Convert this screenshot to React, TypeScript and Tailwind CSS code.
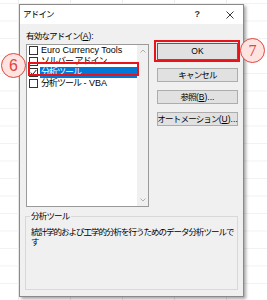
import React from "react";

const font = "font-['Liberation_Sans','Noto_Sans_CJK_JP',sans-serif]";

const items = [
  { jp: "", en: "Euro Currency Tools", checked: false },
  { jp: "ソルバー アドイン", en: "", checked: false },
  { jp: "分析ツール", en: "", checked: true },
  { jp: "分析ツール", en: " - VBA", checked: false },
];

function Checkbox({ checked }: { checked: boolean }) {
  return (
    <div className="w-[9px] h-[9px] border border-[#333] bg-white flex items-center justify-center shrink-0">
      {checked && (
        <svg width="7" height="7" viewBox="0 0 7 7">
          <path d="M0.8 3.6 L2.6 5.5 L6.3 1" fill="none" stroke="#222" strokeWidth="1" />
        </svg>
      )}
    </div>
  );
}

function Button({ children, primary }: { children: React.ReactNode; primary?: boolean }) {
  return (
    <div
      className={
        "w-[81px] flex items-center justify-center bg-[#e1e1e1] text-[8.5px] text-black whitespace-pre " +
        (primary ? "h-[17px] border border-[#0078d7]" : "h-[14px] border border-[#adadad]")
      }
    >
      {children}
    </div>
  );
}

function Marker({ n, serif }: { n: string; serif?: boolean }) {
  return (
    <div
      className={
        "w-[25px] h-[25px] rounded-full border border-[#e2453f] bg-[#fde4e1] flex items-center justify-center text-[16px] leading-none text-[#e2453f] " +
        (serif ? "font-['Liberation_Serif',serif]" : "font-['Liberation_Sans',sans-serif]")
      }
    >
      {n}
    </div>
  );
}

const jp = "tracking-[-0.8px]";

export default function App() {
  return (
    <div
      className={
        "relative w-[267px] h-[300px] overflow-hidden bg-white bg-[linear-gradient(#f2f2f2_1px,transparent_1px),linear-gradient(90deg,#ebebeb_1px,transparent_1px)] bg-[size:52px_17.5px] bg-[position:18px_3px] pl-[19px] pt-[4px] " +
        font
      }
    >
      <div className="w-[225px] h-[293px] border border-[#8a8a8a] bg-[#f0f0f0] shadow-[2px_2px_3px_rgba(0,0,0,0.35)] flex flex-col">
        {/* title bar */}
        <div className="h-[19px] bg-white flex items-center pl-[3px] pr-[9px] text-[8.5px] text-black">
          <span className={jp}>アドイン</span>
          <span className="ml-auto mr-[26px] text-[9px] font-bold text-[#333]">?</span>
          <svg width="8" height="8" viewBox="0 0 8 8">
            <path d="M0.5 0.5 L7.5 7.5 M7.5 0.5 L0.5 7.5" stroke="#222" strokeWidth="0.9" />
          </svg>
        </div>

        <div className="flex pl-[6px] pt-[4px]">
          {/* list column */}
          <div className="w-[123px] flex flex-col">
            <div className="h-[16px] flex items-center text-[8.5px] text-black">
              <span>
                <span className={jp}>有効なアドイン</span>(<span className="underline">A</span>):
              </span>
            </div>
            <div className="relative h-[163px] border border-[#9a9a9a] bg-white flex">
              <div className="flex-1 flex flex-col pl-[2px]">
                {items.map((it) => (
                  <div key={it.jp + it.en} className="h-[11px] flex items-center gap-[2px]">
                    <Checkbox checked={it.checked} />
                    <div
                      className={
                        "flex-1 h-full flex items-center pl-[1px] text-[9px] whitespace-pre " +
                        (it.checked ? "bg-[#0078d7] text-white" : "text-black")
                      }
                    >
                      {it.jp && <span className="tracking-[-1px]">{it.jp}</span>}
                      {it.en && <span>{it.en}</span>}
                    </div>
                  </div>
                ))}
              </div>
              <div className="w-[11px] bg-[#f0f0f0] flex flex-col items-center justify-between py-[4px]">
                <svg width="6" height="4" viewBox="0 0 6 4">
                  <path d="M0.5 3.5 L3 1 L5.5 3.5" fill="none" stroke="#b0b0b0" strokeWidth="1" />
                </svg>
                <svg width="6" height="4" viewBox="0 0 6 4">
                  <path d="M0.5 0.5 L3 3 L5.5 0.5" fill="none" stroke="#b0b0b0" strokeWidth="1" />
                </svg>
              </div>
              {/* annotation box around selected row */}
              <div className="absolute left-[1px] top-[17px] w-[111px] h-[14px] border-2 border-[#e8141b]" />
            </div>
          </div>

          {/* buttons column */}
          <div className="ml-[8px] pt-[15px] flex flex-col gap-[8px]">
            <div className="relative">
              <Button primary>OK</Button>
              <div className="absolute -left-[3px] -top-[3px] w-[86px] h-[22px] border-2 border-[#e8141b]" />
            </div>
            <Button>
              <span className={jp}>キャンセル</span>
            </Button>
            <Button>
              <span className={jp}>参照</span>(<span className="underline">B</span>)...
            </Button>
            <Button>
              <span className={jp}>オートメーション</span>(<span className="underline">U</span>)...
            </Button>
          </div>
        </div>

        {/* description group */}
        <div className="relative mt-[9px] mx-[5px] h-[74px] border border-[#d8d8d8] pt-[11px] pl-[5px]">
          <span className="absolute -top-[6px] left-[4px] bg-[#f0f0f0] px-[1px] text-[8.5px] tracking-[-0.8px] leading-[10px] text-black">
            分析ツール
          </span>
          <p className="text-[8.5px] tracking-[-1px] leading-[9.5px] text-black">
            統計学的および工学的分析を行うためのデータ分析ツールで
            <br />す
          </p>
        </div>
      </div>

      <div className="absolute left-[1px] top-[53px]">
        <Marker n="6" />
      </div>
      <div className="absolute left-[240px] top-[38px]">
        <Marker n="7" serif />
      </div>
    </div>
  );
}
